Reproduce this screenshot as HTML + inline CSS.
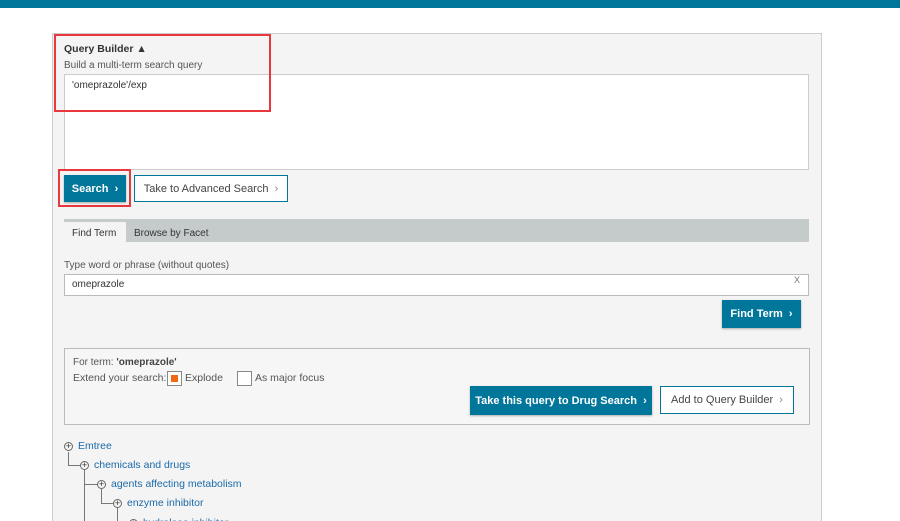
<!DOCTYPE html>
<html><head><style>
*{margin:0;padding:0;box-sizing:border-box}
html,body{width:900px;height:521px;overflow:hidden}
body{background:#fff;font-family:"Liberation Sans",sans-serif;font-size:11px;color:#333;position:relative}
.a{position:absolute}
.btn{position:absolute;background:#00769b;color:#fff;font-weight:bold;display:flex;align-items:center;justify-content:center;font-size:11px;box-shadow:0 1px 2px rgba(0,0,0,.3)}
.obtn{position:absolute;background:#fff;border:1px solid #00769b;color:#444;display:flex;align-items:center;justify-content:center;font-size:11px}
.red{position:absolute;border:2px solid #e8383d}
.lnk{color:#1a6aaa;font-size:10.5px}
.pl{position:absolute;width:9px;height:9px;border:1px solid #666;border-radius:50%;background:#f4f4f4;font-size:9px;line-height:7px;text-align:center;color:#333}
.ln{position:absolute;background:#777}
</style></head><body>
<div class="a" style="left:0;top:0;width:900px;height:8px;background:#00769b"></div>
<div class="a" style="left:52px;top:33px;width:770px;height:520px;background:#f4f4f4;border:1px solid #ccc"></div>
<div class="a" style="left:64px;top:43px;font-weight:bold;font-size:10.5px">Query Builder ▲</div>
<div class="a" style="left:64px;top:60px;color:#555;font-size:10px">Build a multi-term search query</div>
<div class="a" style="left:64px;top:74px;width:745px;height:96px;background:#fff;border:1px solid #ccc"></div>
<div class="a" style="left:72px;top:80px;font-size:10px">'omeprazole'/exp</div>
<div class="red" style="left:54px;top:34px;width:217px;height:78px"></div>
<div class="btn" style="left:64px;top:175px;width:62px;height:27px">Search&nbsp;&nbsp;›</div>
<div class="red" style="left:58px;top:169px;width:73px;height:38px"></div>
<div class="obtn" style="left:134px;top:175px;width:154px;height:27px">Take to Advanced Search&nbsp;&nbsp;<span style="color:#888">›</span></div>
<div class="a" style="left:64px;top:219px;width:745px;height:23px;background:#c5cbcb"></div>
<div class="a" style="left:64px;top:222px;width:62px;height:20px;background:#f4f4f4;font-size:10px;padding:6px 0 0 8px">Find Term</div>
<div class="a" style="left:134px;top:228px;font-size:10px">Browse by Facet</div>
<div class="a" style="left:64px;top:260px;font-size:10px;color:#555">Type word or phrase (without quotes)</div>
<div class="a" style="left:64px;top:274px;width:745px;height:22px;background:#fff;border:1px solid #bbb"></div>
<div class="a" style="left:72px;top:279px;font-size:10px">omeprazole</div>
<div class="a" style="left:794px;top:275px;font-size:9px;color:#777">X</div>
<div class="btn" style="left:722px;top:300px;width:79px;height:28px">Find Term&nbsp;&nbsp;›</div>
<div class="a" style="left:64px;top:348px;width:746px;height:77px;border:1px solid #bbb;background:#f6f6f6"></div>
<div class="a" style="left:73px;top:357px;font-size:10px;color:#555">For term: <b style="color:#444">'omeprazole'</b></div>
<div class="a" style="left:73px;top:372px;font-size:10.5px;color:#555">Extend your search:</div>
<div class="a" style="left:167px;top:371px;width:15px;height:15px;border:1px solid #888;background:#fff"><div style="margin:3px;width:7px;height:7px;background:#f26a10"></div></div>
<div class="a" style="left:185px;top:372px;font-size:10.5px;color:#555">Explode</div>
<div class="a" style="left:237px;top:371px;width:15px;height:15px;border:1px solid #888;background:#fff"></div>
<div class="a" style="left:255px;top:372px;font-size:10.5px;color:#555">As major focus</div>
<div class="btn" style="left:470px;top:386px;width:182px;height:29px">Take this query to Drug Search&nbsp;&nbsp;›</div>
<div class="obtn" style="left:660px;top:386px;width:134px;height:28px">Add to Query Builder&nbsp;&nbsp;<span style="color:#888">›</span></div>
<div class="ln" style="left:68px;top:452px;width:1px;height:14px"></div>
<div class="ln" style="left:68px;top:465px;width:13px;height:1px"></div>
<div class="ln" style="left:84px;top:470px;width:1px;height:51px"></div>
<div class="ln" style="left:84px;top:484px;width:14px;height:1px"></div>
<div class="ln" style="left:101px;top:489px;width:1px;height:15px"></div>
<div class="ln" style="left:101px;top:503px;width:13px;height:1px"></div>
<div class="ln" style="left:117px;top:508px;width:1px;height:13px"></div>
<div class="pl" style="left:64px;top:442px">+</div><div class="a lnk" style="left:78px;top:440px">Emtree</div>
<div class="pl" style="left:80px;top:461px">+</div><div class="a lnk" style="left:94px;top:459px">chemicals and drugs</div>
<div class="pl" style="left:97px;top:480px">+</div><div class="a lnk" style="left:111px;top:478px">agents affecting metabolism</div>
<div class="pl" style="left:113px;top:499px">+</div><div class="a lnk" style="left:127px;top:497px">enzyme inhibitor</div>
<div class="pl" style="left:129px;top:519px">+</div><div class="a lnk" style="left:143px;top:517px">hydrolase inhibitor</div>
</body></html>
